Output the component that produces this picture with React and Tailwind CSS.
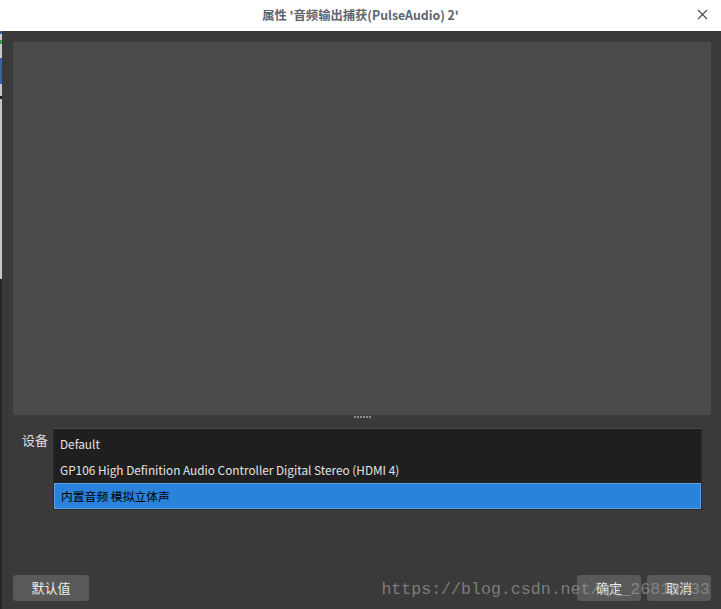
const devices = [
  "Default",
  "GP106 High Definition Audio Controller Digital Stereo (HDMI 4)",
  "内置音频 模拟立体声",
];

function TitleBar() {
  return (
    <div className="relative flex h-[31px] shrink-0 items-center justify-center bg-white pb-[1px]">
      <span className="text-[12.3px] font-bold text-[#5c6672]">
        属性 '音频输出捕获(PulseAudio) 2'
      </span>
      <svg
        className="absolute right-[13px] top-[9px]"
        width="11"
        height="11"
        viewBox="0 0 11 11"
      >
        <path d="M1 1L10 10M10 1L1 10" stroke="#4a4a4a" strokeWidth="1.1" />
      </svg>
    </div>
  );
}

// thin sliver of whatever sits behind the dialog
function EdgeStrip() {
  return (
    <div className="flex w-[2px] shrink-0 flex-col">
      <div className="h-[3px] bg-[#2d5ea8]" />
      <div className="h-[6px] bg-[#c9c9c9]" />
      <div className="h-[4px] bg-[#3b9a5a]" />
      <div className="h-[14px] bg-[#c9c9c9]" />
      <div className="h-[26px] bg-[#3a5fb0]" />
      <div className="h-[12px] bg-[#c9c9c9]" />
      <div className="h-[3px] bg-[#222]" />
      <div className="h-[180px] bg-[#c4c6ca]" />
      <div className="flex-1 bg-[#262626]" />
    </div>
  );
}

function DeviceList({ selected }) {
  return (
    <div className="mr-[9px] flex-1 border border-[#2a2a2a] border-t-[#4a4a4a] bg-[#1f1f1f] pt-[2px]">
      {devices.map((d, i) => (
        <div
          key={d}
          className={
            i === selected
              ? "flex h-[26px] items-center border border-[#5aa2ec] bg-[#2a82da] px-[6px] text-[11.8px] text-black"
              : "flex h-[26px] items-center px-[6px] text-[11.8px] text-[#e4e4e4]"
          }
        >
          {d}
        </div>
      ))}
    </div>
  );
}

function Button({ children, className }) {
  return (
    <button
      className={
        "flex h-[26px] items-center justify-center rounded-[3px] bg-[#595959] text-[13px] text-[#ececec] " +
        className
      }
    >
      {children}
    </button>
  );
}

export default function App() {
  return (
    <div
      className="flex h-[609px] w-[721px] flex-col overflow-hidden bg-[#3a3a3a]"
      style={{ fontFamily: '"Noto Sans CJK SC", "Noto Sans", sans-serif' }}
    >
      <TitleBar />
      <div className="flex flex-1">
        <EdgeStrip />
        <div className="relative flex flex-1 flex-col pl-[11px] pr-[10px] pt-[11px]">
          <div className="h-[373px] bg-[#4a4a4a]" />
          <div className="flex h-[13px] justify-center pt-[1px]">
            <div className="flex gap-[1px]">
              {[0, 1, 2, 3, 4, 5].map((k) => (
                <div key={k} className="h-[2px] w-[2px] bg-[#8c8c8c]" />
              ))}
            </div>
          </div>
          <div className="flex">
            <div className="w-[40px] pr-[5px] pt-[2px] text-right text-[13px] text-[#dedede]">
              设备
            </div>
            <DeviceList selected={2} />
          </div>
          <div className="flex-1" />
          <div className="flex pb-[8px]">
            <Button className="w-[76px]">默认值</Button>
            <div className="flex-1" />
            <div className="flex gap-[6px]">
              <Button className="w-[64px]">确定</Button>
              <Button className="w-[64px]">取消</Button>
            </div>
          </div>
          <div
            className="pointer-events-none absolute bottom-[10px] right-[11px] text-[16.6px] leading-none text-[#9a9a9a]/70"
            style={{ fontFamily: '"Liberation Mono", monospace' }}
          >
            https://blog.csdn.net/qq_26819933
          </div>
        </div>
      </div>
    </div>
  );
}
